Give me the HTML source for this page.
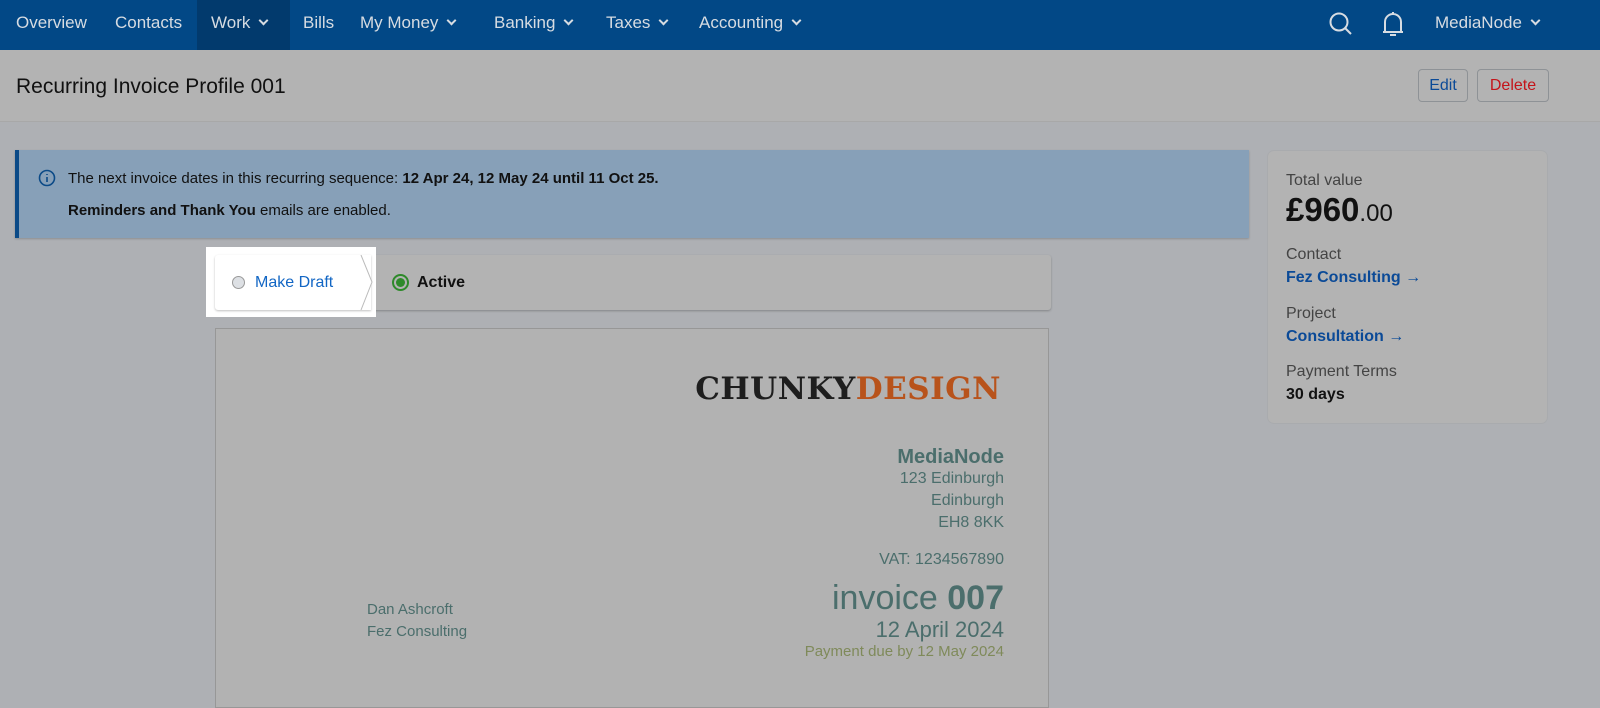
<!DOCTYPE html>
<html><head><meta charset="utf-8"><style>
*{box-sizing:border-box;margin:0;padding:0}
body{width:1600px;height:698px;overflow:hidden;font-family:"Liberation Sans",sans-serif;background:#aeb0b4;position:relative}
.nav{position:absolute;left:0;top:0;width:1600px;height:50px;background:#024886;color:#d7dce2;font-size:17px}
.nav span{position:absolute;top:13px}
.nav .act{position:absolute;left:197px;top:0;width:93px;height:50px;background:#023a6d}
.chev{display:inline-block;width:7px;height:7px;border-right:2px solid #d7dce2;border-bottom:2px solid #d7dce2;transform:rotate(45deg);margin-left:10px;position:relative;top:-4px}
.hdr{position:absolute;top:50px;left:0;width:1600px;height:72px;background:#b3b3b3;border-bottom:1px solid #a8a8a8}
.hdr h1{position:absolute;left:16px;top:25px;font-size:21px;font-weight:normal;color:#111}
.btn{position:absolute;top:19px;height:33px;border:1px solid #8e9296;border-radius:4px;font-size:16px;text-align:center;line-height:31px}
.info{position:absolute;left:15px;top:150px;width:1234px;height:88px;background:#87a0b8;border-left:4px solid #0b4a87;box-shadow:0 1px 2px rgba(0,0,0,.2);font-size:15px;color:#111}
.info p{position:absolute;left:49px}
.steps{position:absolute;left:215px;top:255px;width:836px;height:55px;background:#b3b3b3;border-radius:3px;box-shadow:0 1px 2px rgba(0,0,0,.25)}
.hl{position:absolute;left:206px;top:247px;width:170px;height:70px;background:#fff}
.doc{position:absolute;left:215px;top:328px;width:834px;height:380px;background:#b2b2b2;border:1px solid #979797}
.t{position:absolute;color:#4b6e6c;font-family:"Liberation Sans",sans-serif;white-space:nowrap}
.r{text-align:right;right:44px}
.card{position:absolute;left:1267px;top:150px;width:281px;height:274px;background:#b3b3b3;border-radius:7px;border:1px solid #a9abae}
.card div{position:absolute;left:18px;font-size:16px}
.lab{color:#444}
.lnk{color:#0b4a97;font-weight:bold}
</style></head><body>
<div class="nav">
<div class="act"></div>
<span style="left:16px">Overview</span>
<span style="left:115px">Contacts</span>
<span style="left:211px">Work<i class="chev"></i></span>
<span style="left:303px">Bills</span>
<span style="left:360px">My Money<i class="chev"></i></span>
<span style="left:494px">Banking<i class="chev"></i></span>
<span style="left:606px">Taxes<i class="chev"></i></span>
<span style="left:699px">Accounting<i class="chev"></i></span>
<svg style="position:absolute;left:1328px;top:11px" width="26" height="26" viewBox="0 0 26 26" fill="none" stroke="#d7dce2" stroke-width="2"><circle cx="11" cy="11" r="8.5"/><path d="M17 17l6 6"/></svg>
<svg style="position:absolute;left:1381px;top:10px" width="24" height="28" viewBox="0 0 24 28" fill="none" stroke="#d7dce2" stroke-width="2"><path d="M4 22V12a8 8 0 0 1 16 0v10M2 22h20M9 25h6M12 2v2"/></svg>
<span style="left:1435px">MediaNode<i class="chev"></i></span>
</div>
<div class="hdr"><h1>Recurring Invoice Profile 001</h1>
<div class="btn" style="left:1418px;width:50px;color:#0b4a97">Edit</div>
<div class="btn" style="left:1477px;width:72px;color:#c4141a">Delete</div></div>
<div class="info">
<svg style="position:absolute;left:19px;top:19px" width="18" height="18" viewBox="0 0 18 18" fill="none" stroke="#0b4a87" stroke-width="1.6"><circle cx="9" cy="9" r="7.5"/><path d="M9 8v5M9 5v1"/></svg>
<p style="top:20px">The next invoice dates in this recurring sequence: <b>12 Apr 24, 12 May 24 until 11 Oct 25.</b></p>
<p style="top:52px"><b>Reminders and Thank You</b> emails are enabled.</p></div>
<div class="steps"></div>
<div class="hl"></div>
<div style="position:absolute;left:215px;top:255px;width:156px;height:55px;background:#fff;border-radius:3px 0 0 3px;box-shadow:0 1px 2px rgba(0,0,0,.25)"></div>
<svg style="position:absolute;left:360px;top:255px" width="16" height="55"><path d="M1 0L12 27L1 55" fill="#fff" stroke="#bbb"/></svg>
<div style="position:absolute;left:232px;top:276px;width:13px;height:13px;border-radius:50%;background:#dde0e4;border:1px solid #999"></div>
<div style="position:absolute;left:255px;top:274px;color:#1266c4;font-size:16px">Make Draft</div>
<div style="position:absolute;left:392px;top:274px;width:17px;height:17px;border-radius:50%;border:2px solid #2e8a2a;background:#b3b3b3"><div style="margin:2px;width:9px;height:9px;border-radius:50%;background:#2e8a2a"></div></div>
<div style="position:absolute;left:417px;top:274px;color:#111;font-size:16px;font-weight:bold">Active</div>
<div class="doc">
<div class="t" style="right:47px;top:42px;font-family:'DejaVu Serif',serif;font-weight:bold;font-size:31px;letter-spacing:0.5px;color:#1e1e1e">CHUNKY<span style="color:#b8531b">DESIGN</span></div>
<div class="t r" style="top:117px;font-size:20px;font-weight:bold">MediaNode</div>
<div class="t r" style="top:141px;font-size:16px">123 Edinburgh</div>
<div class="t r" style="top:163px;font-size:16px">Edinburgh</div>
<div class="t r" style="top:185px;font-size:16px">EH8 8KK</div>
<div class="t r" style="top:222px;font-size:16px">VAT: 1234567890</div>
<div class="t r" style="top:250px;font-size:34px">invoice <b>007</b></div>
<div class="t r" style="top:288px;font-size:22px">12 April 2024</div>
<div class="t r" style="top:314px;font-size:15px;color:#7f8a5a">Payment due by 12 May 2024</div>
<div class="t" style="left:151px;top:272px;font-size:15px">Dan Ashcroft</div>
<div class="t" style="left:151px;top:294px;font-size:15px">Fez Consulting</div>
</div>
<div class="card">
<div class="lab" style="top:21px">Total value</div>
<div style="top:40px;font-size:33px;font-weight:bold;color:#111">£960<span style="font-size:24px;font-weight:normal">.00</span></div>
<div class="lab" style="top:95px">Contact</div>
<div class="lnk" style="top:118px">Fez Consulting →</div>
<div class="lab" style="top:154px">Project</div>
<div class="lnk" style="top:177px">Consultation →</div>
<div class="lab" style="top:212px">Payment Terms</div>
<div style="top:235px;font-weight:bold;color:#111">30 days</div>
</div>
</body></html>
